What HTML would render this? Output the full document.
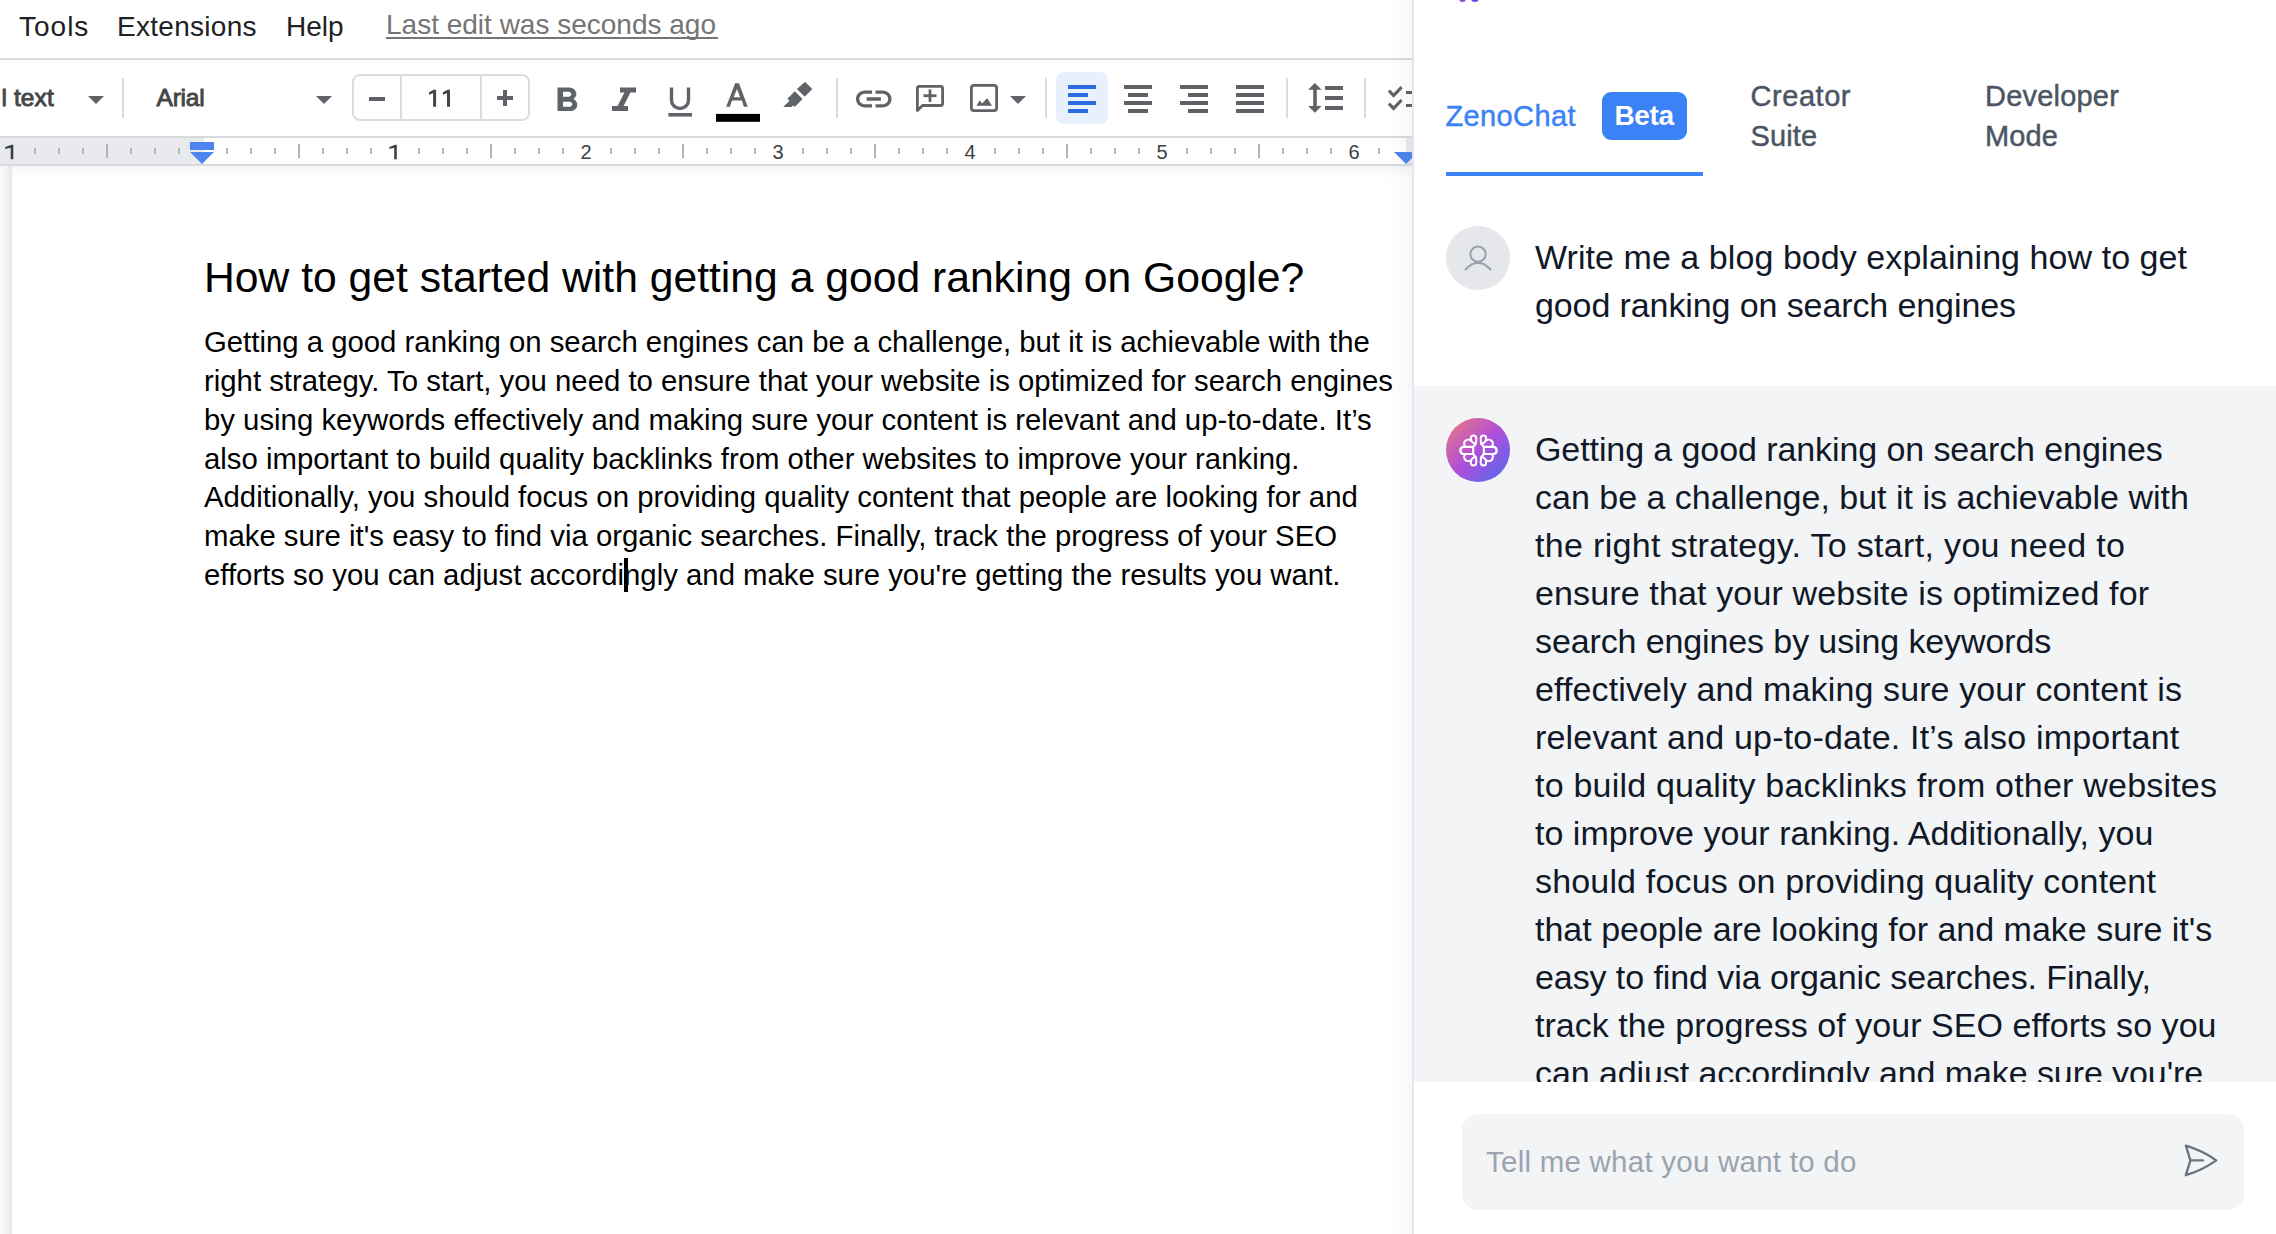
<!DOCTYPE html>
<html><head><meta charset="utf-8">
<style>
html,body{margin:0;padding:0;width:2276px;height:1234px;overflow:hidden;background:#fff;}
body{position:relative;font-family:"Liberation Sans",sans-serif;}
.t{position:absolute;white-space:nowrap;}
.r{position:absolute;}
svg.a{position:absolute;left:0;top:0;overflow:visible;}
</style></head><body>
<div class="t" style="left:19px;top:11.20px;font-size:28px;line-height:32.2px;color:#202124;font-weight:400;letter-spacing:1.000px;">Tools</div>
<div class="t" style="left:117px;top:11.20px;font-size:28px;line-height:32.2px;color:#202124;font-weight:400;letter-spacing:0.280px;">Extensions</div>
<div class="t" style="left:286px;top:11.20px;font-size:28px;line-height:32.2px;color:#202124;font-weight:400;">Help</div>
<div class="t" style="left:386px;top:9.20px;font-size:28px;line-height:32.2px;color:#757575;font-weight:400;">Last edit was seconds ago</div>
<div class="r" style="left:386px;top:37px;width:332.00px;height:2.00px;background:#757575;"></div>
<div class="r" style="left:0px;top:58px;width:1412.00px;height:2.00px;background:#dadce0;"></div>
<div class="t" style="left:1.5px;top:83.93px;font-size:24.5px;line-height:28.17px;color:#444746;font-weight:400;letter-spacing:0.100px;-webkit-text-stroke:0.9px #444746;">l text</div>
<div class="r" style="left:122px;top:78px;width:2.00px;height:40.00px;background:#dadce0;"></div>
<div class="t" style="left:156.5px;top:83.93px;font-size:24.5px;line-height:28.17px;color:#444746;font-weight:400;letter-spacing:-0.200px;-webkit-text-stroke:0.9px #444746;">Arial</div>
<div class="r" style="left:352px;top:74px;width:174px;height:43px;border:2px solid #dadce0;border-radius:8px;"></div>
<div class="r" style="left:400px;top:74px;width:2.00px;height:47.00px;background:#dadce0;"></div>
<div class="r" style="left:480px;top:74px;width:2.00px;height:47.00px;background:#dadce0;"></div>
<div class="r" style="left:369px;top:96.5px;width:16.00px;height:4.00px;background:#5f6368;"></div>
<div class="r" style="left:497px;top:96px;width:16.00px;height:4.00px;background:#5f6368;"></div>
<div class="r" style="left:503px;top:90px;width:4.00px;height:16.00px;background:#5f6368;"></div>
<div class="r" style="left:836px;top:78px;width:2.00px;height:40.00px;background:#dadce0;"></div>
<div class="r" style="left:1045px;top:78px;width:2.00px;height:40.00px;background:#dadce0;"></div>
<div class="r" style="left:1056px;top:72px;width:52.00px;height:52.00px;background:#e8f0fe;border-radius:8px;"></div>
<div class="r" style="left:1068px;top:85px;width:28.00px;height:4.00px;background:#2c6bdf;"></div>
<div class="r" style="left:1068px;top:93px;width:20.00px;height:4.00px;background:#2c6bdf;"></div>
<div class="r" style="left:1068px;top:101px;width:28.00px;height:4.00px;background:#2c6bdf;"></div>
<div class="r" style="left:1068px;top:109px;width:20.00px;height:4.00px;background:#2c6bdf;"></div>
<div class="r" style="left:1124px;top:85px;width:28.00px;height:4.00px;background:#5f6368;"></div>
<div class="r" style="left:1128px;top:93px;width:20.00px;height:4.00px;background:#5f6368;"></div>
<div class="r" style="left:1124px;top:101px;width:28.00px;height:4.00px;background:#5f6368;"></div>
<div class="r" style="left:1128px;top:109px;width:20.00px;height:4.00px;background:#5f6368;"></div>
<div class="r" style="left:1180px;top:85px;width:28.00px;height:4.00px;background:#5f6368;"></div>
<div class="r" style="left:1188px;top:93px;width:20.00px;height:4.00px;background:#5f6368;"></div>
<div class="r" style="left:1180px;top:101px;width:28.00px;height:4.00px;background:#5f6368;"></div>
<div class="r" style="left:1188px;top:109px;width:20.00px;height:4.00px;background:#5f6368;"></div>
<div class="r" style="left:1236px;top:85px;width:28.00px;height:4.00px;background:#5f6368;"></div>
<div class="r" style="left:1236px;top:93px;width:28.00px;height:4.00px;background:#5f6368;"></div>
<div class="r" style="left:1236px;top:101px;width:28.00px;height:4.00px;background:#5f6368;"></div>
<div class="r" style="left:1236px;top:109px;width:28.00px;height:4.00px;background:#5f6368;"></div>
<div class="r" style="left:1286px;top:78px;width:2.00px;height:40.00px;background:#dadce0;"></div>
<div class="r" style="left:1325px;top:86.1px;width:18.00px;height:3.70px;background:#5f6368;"></div>
<div class="r" style="left:1325px;top:96.1px;width:18.00px;height:3.70px;background:#5f6368;"></div>
<div class="r" style="left:1325px;top:106.2px;width:18.00px;height:3.70px;background:#5f6368;"></div>
<div class="r" style="left:1364.2px;top:78px;width:1.80px;height:40.00px;background:#dadce0;"></div>
<div class="r" style="left:1406px;top:91.1px;width:6.00px;height:3.00px;background:#5f6368;"></div>
<div class="r" style="left:1406px;top:104px;width:6.00px;height:3.00px;background:#5f6368;"></div>
<div class="r" style="left:0px;top:136px;width:1412.00px;height:2.00px;background:#d8dadd;"></div>
<div class="r" style="left:0px;top:138px;width:204.00px;height:26.00px;background:#e8eaed;"></div>
<div class="r" style="left:1406px;top:138px;width:6.00px;height:26.00px;background:#e8eaed;"></div>
<div class="r" style="left:0px;top:164px;width:1412.00px;height:2.00px;background:#d8dadd;"></div>
<div class="r" style="left:34px;top:148px;width:2.00px;height:6.00px;background:#b2b6bb;"></div>
<div class="r" style="left:58px;top:148px;width:2.00px;height:6.00px;background:#b2b6bb;"></div>
<div class="r" style="left:82px;top:148px;width:2.00px;height:6.00px;background:#b2b6bb;"></div>
<div class="r" style="left:106px;top:144px;width:2.00px;height:14.00px;background:#b2b6bb;"></div>
<div class="r" style="left:130px;top:148px;width:2.00px;height:6.00px;background:#b2b6bb;"></div>
<div class="r" style="left:154px;top:148px;width:2.00px;height:6.00px;background:#b2b6bb;"></div>
<div class="r" style="left:178px;top:148px;width:2.00px;height:6.00px;background:#b2b6bb;"></div>
<div class="r" style="left:226px;top:148px;width:2.00px;height:6.00px;background:#b2b6bb;"></div>
<div class="r" style="left:250px;top:148px;width:2.00px;height:6.00px;background:#b2b6bb;"></div>
<div class="r" style="left:274px;top:148px;width:2.00px;height:6.00px;background:#b2b6bb;"></div>
<div class="r" style="left:298px;top:144px;width:2.00px;height:14.00px;background:#b2b6bb;"></div>
<div class="r" style="left:322px;top:148px;width:2.00px;height:6.00px;background:#b2b6bb;"></div>
<div class="r" style="left:346px;top:148px;width:2.00px;height:6.00px;background:#b2b6bb;"></div>
<div class="r" style="left:370px;top:148px;width:2.00px;height:6.00px;background:#b2b6bb;"></div>
<div class="r" style="left:418px;top:148px;width:2.00px;height:6.00px;background:#b2b6bb;"></div>
<div class="r" style="left:442px;top:148px;width:2.00px;height:6.00px;background:#b2b6bb;"></div>
<div class="r" style="left:466px;top:148px;width:2.00px;height:6.00px;background:#b2b6bb;"></div>
<div class="r" style="left:490px;top:144px;width:2.00px;height:14.00px;background:#b2b6bb;"></div>
<div class="r" style="left:514px;top:148px;width:2.00px;height:6.00px;background:#b2b6bb;"></div>
<div class="r" style="left:538px;top:148px;width:2.00px;height:6.00px;background:#b2b6bb;"></div>
<div class="r" style="left:562px;top:148px;width:2.00px;height:6.00px;background:#b2b6bb;"></div>
<div class="r" style="left:610px;top:148px;width:2.00px;height:6.00px;background:#b2b6bb;"></div>
<div class="r" style="left:634px;top:148px;width:2.00px;height:6.00px;background:#b2b6bb;"></div>
<div class="r" style="left:658px;top:148px;width:2.00px;height:6.00px;background:#b2b6bb;"></div>
<div class="r" style="left:682px;top:144px;width:2.00px;height:14.00px;background:#b2b6bb;"></div>
<div class="r" style="left:706px;top:148px;width:2.00px;height:6.00px;background:#b2b6bb;"></div>
<div class="r" style="left:730px;top:148px;width:2.00px;height:6.00px;background:#b2b6bb;"></div>
<div class="r" style="left:754px;top:148px;width:2.00px;height:6.00px;background:#b2b6bb;"></div>
<div class="r" style="left:802px;top:148px;width:2.00px;height:6.00px;background:#b2b6bb;"></div>
<div class="r" style="left:826px;top:148px;width:2.00px;height:6.00px;background:#b2b6bb;"></div>
<div class="r" style="left:850px;top:148px;width:2.00px;height:6.00px;background:#b2b6bb;"></div>
<div class="r" style="left:874px;top:144px;width:2.00px;height:14.00px;background:#b2b6bb;"></div>
<div class="r" style="left:898px;top:148px;width:2.00px;height:6.00px;background:#b2b6bb;"></div>
<div class="r" style="left:922px;top:148px;width:2.00px;height:6.00px;background:#b2b6bb;"></div>
<div class="r" style="left:946px;top:148px;width:2.00px;height:6.00px;background:#b2b6bb;"></div>
<div class="r" style="left:994px;top:148px;width:2.00px;height:6.00px;background:#b2b6bb;"></div>
<div class="r" style="left:1018px;top:148px;width:2.00px;height:6.00px;background:#b2b6bb;"></div>
<div class="r" style="left:1042px;top:148px;width:2.00px;height:6.00px;background:#b2b6bb;"></div>
<div class="r" style="left:1066px;top:144px;width:2.00px;height:14.00px;background:#b2b6bb;"></div>
<div class="r" style="left:1090px;top:148px;width:2.00px;height:6.00px;background:#b2b6bb;"></div>
<div class="r" style="left:1114px;top:148px;width:2.00px;height:6.00px;background:#b2b6bb;"></div>
<div class="r" style="left:1138px;top:148px;width:2.00px;height:6.00px;background:#b2b6bb;"></div>
<div class="r" style="left:1186px;top:148px;width:2.00px;height:6.00px;background:#b2b6bb;"></div>
<div class="r" style="left:1210px;top:148px;width:2.00px;height:6.00px;background:#b2b6bb;"></div>
<div class="r" style="left:1234px;top:148px;width:2.00px;height:6.00px;background:#b2b6bb;"></div>
<div class="r" style="left:1258px;top:144px;width:2.00px;height:14.00px;background:#b2b6bb;"></div>
<div class="r" style="left:1282px;top:148px;width:2.00px;height:6.00px;background:#b2b6bb;"></div>
<div class="r" style="left:1306px;top:148px;width:2.00px;height:6.00px;background:#b2b6bb;"></div>
<div class="r" style="left:1330px;top:148px;width:2.00px;height:6.00px;background:#b2b6bb;"></div>
<div class="r" style="left:1378px;top:148px;width:2.00px;height:6.00px;background:#b2b6bb;"></div>
<div class="t" style="left:571px;top:139px;width:30px;text-align:center;font-size:20px;line-height:26px;color:#3c4043;">2</div>
<div class="t" style="left:763px;top:139px;width:30px;text-align:center;font-size:20px;line-height:26px;color:#3c4043;">3</div>
<div class="t" style="left:955px;top:139px;width:30px;text-align:center;font-size:20px;line-height:26px;color:#3c4043;">4</div>
<div class="t" style="left:1147px;top:139px;width:30px;text-align:center;font-size:20px;line-height:26px;color:#3c4043;">5</div>
<div class="t" style="left:1339px;top:139px;width:30px;text-align:center;font-size:20px;line-height:26px;color:#3c4043;">6</div>
<div class="r" style="left:190px;top:142px;width:24.00px;height:8.00px;background:#4e85ec;"></div>
<div class="r" style="left:0px;top:166px;width:12.00px;height:1068.00px;background:linear-gradient(to right,#f8f9fa 0,#f1f3f4 6px,#e3e5e8 12px);"></div>
<div class="r" style="left:12px;top:166px;width:1400.00px;height:12.00px;background:linear-gradient(to bottom,#f6f6f6,#ffffff);"></div>
<div class="t" style="left:204px;top:253.28px;font-size:42.67px;line-height:49.07px;color:#000;font-weight:400;">How to get started with getting a good ranking on Google?</div>
<div class="t" style="left:204px;top:325.07px;font-size:29.33px;line-height:33.73px;color:#000;font-weight:400;">Getting a good ranking on search engines can be a challenge, but it is achievable with the</div>
<div class="t" style="left:204px;top:363.92px;font-size:29.33px;line-height:33.73px;color:#000;font-weight:400;">right strategy. To start, you need to ensure that your website is optimized for search engines</div>
<div class="t" style="left:204px;top:402.77px;font-size:29.33px;line-height:33.73px;color:#000;font-weight:400;">by using keywords effectively and making sure your content is relevant and up-to-date. It’s</div>
<div class="t" style="left:204px;top:441.62px;font-size:29.33px;line-height:33.73px;color:#000;font-weight:400;">also important to build quality backlinks from other websites to improve your ranking.</div>
<div class="t" style="left:204px;top:480.47px;font-size:29.33px;line-height:33.73px;color:#000;font-weight:400;">Additionally, you should focus on providing quality content that people are looking for and</div>
<div class="t" style="left:204px;top:519.32px;font-size:29.33px;line-height:33.73px;color:#000;font-weight:400;">make sure it's easy to find via organic searches. Finally, track the progress of your SEO</div>
<div class="t" style="left:204px;top:558.17px;font-size:29.33px;line-height:33.73px;color:#000;font-weight:400;">efforts so you can adjust accordingly and make sure you're getting the results you want.</div>
<div class="r" style="left:624px;top:558px;width:4.00px;height:34.00px;background:#000;"></div>
<svg class="a" width="1" height="1"><polygon points="88,96 104,96 96.0,104" fill="#5f6368"/><polygon points="316,96 332,96 324.0,104" fill="#5f6368"/><polygon fill="#444746" points="436.1,89.8 436.1,106.8 433.1,106.8 433.1,93.2 429,94.8 429,92.3 433.6,89.8"/><polygon fill="#444746" points="450.0,89.8 450.0,106.8 447.0,106.8 447.0,93.2 442.9,94.8 442.9,92.3 447.5,89.8"/><g transform="translate(544.6,80.8) scale(1.842,1.679)"><path fill="#5f6368" d="M15.6 10.79c.97-.67 1.65-1.77 1.65-2.79 0-2.26-1.75-4-4-4H7v14h7.04c2.09 0 3.71-1.7 3.71-3.79 0-1.52-.86-2.82-2.15-3.42zM10 6.5h3c.83 0 1.5.67 1.5 1.5s-.67 1.5-1.5 1.5h-3v-3zm3.5 9H10v-3h3.5c.83 0 1.5.67 1.5 1.5s-.67 1.5-1.5 1.5z"/></g><g transform="translate(600,80.8) scale(2,1.679)"><path fill="#5f6368" d="M10 4v3h2.21l-3.42 8H6v3h8v-3h-2.21l3.42-8H18V4z"/></g><path d="M671.5,87.5 V100 a8.5,8.5 0 0 0 17,0 V87.5" fill="none" stroke="#5f6368" stroke-width="3.4"/><rect x="668.4" y="113" width="23.6" height="3.6" fill="#5f6368"/><path fill="#5f6368" fill-rule="evenodd" d="M735.1,83.2 H739 L747.7,106.7 H743.8 L741.9,100.6 H732 L729.8,106.7 H726.2 Z M733.7,97.2 H740.2 L736.9,89 Z"/><rect x="716" y="113.9" width="44" height="7.9" fill="#000"/><polygon fill="#5f6368" points="794.8,91.2 802.6,98.9 794.6,106.9 793.1,105.2 791.7,106.9 783.2,106.9 789.5,100.8 787.3,98.7"/><polygon fill="#5f6368" stroke="#5f6368" stroke-width="1.2" stroke-linejoin="round" points="805,82.6 811.4,89 804.7,95.9 797.8,89"/><g transform="translate(852.4,78.6) scale(1.78,1.7)"><path fill="#5f6368" d="M3.9 12c0-1.71 1.39-3.1 3.1-3.1h4V7H7c-2.76 0-5 2.24-5 5s2.24 5 5 5h4v-1.9H7c-1.71 0-3.1-1.39-3.1-3.1zM8 13h8v-2H8v2zm9-6h-4v1.9h4c1.71 0 3.1 1.39 3.1 3.1s-1.39 3.1-3.1 3.1h-4V17h4c2.76 0 5-2.24 5-5s-2.24-5-5-5z"/></g><path fill="none" stroke="#5f6368" stroke-width="2.8" stroke-linejoin="round" d="M917.4,107 V88.4 a2,2 0 0 1 2,-2 H940.6 a2,2 0 0 1 2,2 V103.5 a2,2 0 0 1 -2,2 H922.5 L917.4,110.6 Z"/><rect x="923.5" y="94.3" width="13" height="2.8" fill="#5f6368"/><rect x="928.6" y="89.4" width="2.8" height="12.6" fill="#5f6368"/><rect x="971.4" y="85.4" width="25.2" height="25.2" rx="2.5" fill="none" stroke="#5f6368" stroke-width="2.8"/><polygon fill="#5f6368" points="976.5,105.7 979.7,100.3 982,103.5 987.2,98.2 992,105.7"/><polygon points="1010,96 1026,96 1018.0,104" fill="#5f6368"/><polygon fill="#5f6368" points="1314.9,83.1 1321.7,89.8 1316.8,89.8 1316.8,106.1 1321.7,106.1 1314.9,112.8 1308.1,106.1 1313.2,106.1 1313.2,89.8 1308.1,89.8"/><polyline fill="none" stroke="#5f6368" stroke-width="3.1" points="1388.9,90.7 1393.6,95.5 1401.6,87.1"/><polyline fill="none" stroke="#5f6368" stroke-width="3.1" points="1388.9,103.6 1393.6,108.4 1401.6,100"/><polygon fill="#3c4043" points="13.3,144.8 13.3,159.20000000000002 10.700000000000001,159.20000000000002 10.700000000000001,147.68 5.2,149.12 5.2,146.96 11.74,144.8"/><polygon fill="#3c4043" points="396.79999999999995,144.8 396.79999999999995,159.20000000000002 394.19999999999993,159.20000000000002 394.19999999999993,147.68 389.4,149.12 389.4,146.96 395.23999999999995,144.8"/><polygon fill="#4e85ec" points="190,152 214,152 202,164"/><polygon fill="#4e85ec" points="1394,152 1418,152 1406,164"/></svg>
<div class="r" style="left:1385px;top:0px;width:27.00px;height:1234.00px;background:linear-gradient(to right,rgba(0,0,0,0),rgba(0,0,0,0.03));"></div>
<div class="r" style="left:1412px;top:0px;width:2.00px;height:1234.00px;background:#e4e6f4;"></div>
<div class="r" style="left:1414px;top:0px;width:862.00px;height:1234.00px;background:#ffffff;"></div>
<div class="r" style="left:1458.5px;top:-5px;width:7.10px;height:7.00px;background:#8a46df;border-radius:50%;"></div>
<div class="r" style="left:1471.2px;top:-5px;width:7.60px;height:7.00px;background:#5552e3;border-radius:50%;"></div>
<div class="t" style="left:1445.5px;top:100.28px;font-size:29px;line-height:33.35px;color:#3b82f6;font-weight:400;letter-spacing:0.378px;-webkit-text-stroke:0.45px #3b82f6;">ZenoChat</div>
<div class="r" style="left:1602px;top:92px;width:85.00px;height:48.00px;background:#3b82f6;border-radius:9px;"></div>
<div class="t" style="left:1614.5px;top:100.20px;font-size:28px;line-height:32.2px;color:#fff;font-weight:700;letter-spacing:-0.400px;">Beta</div>
<div class="r" style="left:1446px;top:172px;width:257.00px;height:4.00px;background:#3b82f6;"></div>
<div class="t" style="left:1750.5px;top:79.78px;font-size:29px;line-height:33.35px;color:#4b5563;font-weight:400;letter-spacing:0.550px;-webkit-text-stroke:0.45px #4b5563;">Creator</div>
<div class="t" style="left:1750.5px;top:119.78px;font-size:29px;line-height:33.35px;color:#4b5563;font-weight:400;letter-spacing:0.125px;-webkit-text-stroke:0.45px #4b5563;">Suite</div>
<div class="t" style="left:1985px;top:79.78px;font-size:29px;line-height:33.35px;color:#4b5563;font-weight:400;letter-spacing:0.202px;-webkit-text-stroke:0.45px #4b5563;">Developer</div>
<div class="t" style="left:1985px;top:119.78px;font-size:29px;line-height:33.35px;color:#4b5563;font-weight:400;letter-spacing:0.119px;-webkit-text-stroke:0.45px #4b5563;">Mode</div>
<div class="r" style="left:1446px;top:226px;width:64.00px;height:64.00px;background:#e5e7eb;border-radius:50%;"></div>
<div class="t" style="left:1535px;top:237.67px;font-size:34px;line-height:39.1px;color:#111827;font-weight:400;letter-spacing:0.060px;">Write me a blog body explaining how to get</div>
<div class="t" style="left:1535px;top:285.67px;font-size:34px;line-height:39.1px;color:#111827;font-weight:400;letter-spacing:-0.100px;">good ranking on search engines</div>
<div class="r" style="left:1414px;top:386px;width:862px;height:696px;background:#f3f4f6;overflow:hidden;">
<div class="t" style="left:121px;top:43.67px;font-size:34px;line-height:39.1px;color:#111827;font-weight:400;letter-spacing:-0.090px;">Getting a good ranking on search engines</div>
<div class="t" style="left:121px;top:91.67px;font-size:34px;line-height:39.1px;color:#111827;font-weight:400;letter-spacing:-0.002px;">can be a challenge, but it is achievable with</div>
<div class="t" style="left:121px;top:139.67px;font-size:34px;line-height:39.1px;color:#111827;font-weight:400;letter-spacing:0.323px;">the right strategy. To start, you need to</div>
<div class="t" style="left:121px;top:187.67px;font-size:34px;line-height:39.1px;color:#111827;font-weight:400;letter-spacing:0.137px;">ensure that your website is optimized for</div>
<div class="t" style="left:121px;top:235.67px;font-size:34px;line-height:39.1px;color:#111827;font-weight:400;letter-spacing:-0.114px;">search engines by using keywords</div>
<div class="t" style="left:121px;top:283.67px;font-size:34px;line-height:39.1px;color:#111827;font-weight:400;letter-spacing:0.121px;">effectively and making sure your content is</div>
<div class="t" style="left:121px;top:331.67px;font-size:34px;line-height:39.1px;color:#111827;font-weight:400;letter-spacing:0.184px;">relevant and up-to-date. It’s also important</div>
<div class="t" style="left:121px;top:379.67px;font-size:34px;line-height:39.1px;color:#111827;font-weight:400;letter-spacing:0.205px;">to build quality backlinks from other websites</div>
<div class="t" style="left:121px;top:427.67px;font-size:34px;line-height:39.1px;color:#111827;font-weight:400;letter-spacing:0.023px;">to improve your ranking. Additionally, you</div>
<div class="t" style="left:121px;top:475.67px;font-size:34px;line-height:39.1px;color:#111827;font-weight:400;letter-spacing:0.165px;">should focus on providing quality content</div>
<div class="t" style="left:121px;top:523.67px;font-size:34px;line-height:39.1px;color:#111827;font-weight:400;letter-spacing:-0.005px;">that people are looking for and make sure it's</div>
<div class="t" style="left:121px;top:571.67px;font-size:34px;line-height:39.1px;color:#111827;font-weight:400;letter-spacing:-0.079px;">easy to find via organic searches. Finally,</div>
<div class="t" style="left:121px;top:619.67px;font-size:34px;line-height:39.1px;color:#111827;font-weight:400;letter-spacing:0.041px;">track the progress of your SEO efforts so you</div>
<div class="t" style="left:121px;top:667.67px;font-size:34px;line-height:39.1px;color:#111827;font-weight:400;letter-spacing:-0.085px;">can adjust accordingly and make sure you're</div>
</div>
<div class="r" style="left:1446px;top:418px;width:64.00px;height:64.00px;background:linear-gradient(135deg,#ee7a7a 0%,#b04fd8 50%,#4a6cf2 100%);border-radius:50%;"></div>
<div class="r" style="left:1462px;top:1114px;width:782.00px;height:96.00px;background:#f3f4f6;border-radius:16px;"></div>
<div class="t" style="left:1486px;top:1144.82px;font-size:29.5px;line-height:33.92px;color:#9ca3af;font-weight:400;letter-spacing:0.241px;-webkit-text-stroke:0px #9ca3af;">Tell me what you want to do</div>
<svg class="a" width="1" height="1"><circle cx="1478" cy="254.2" r="7.6" fill="none" stroke="#94a0ae" stroke-width="2"/><path d="M1465.5,269.5 Q1478,256 1490.5,269.5" fill="none" stroke="#94a0ae" stroke-width="2" stroke-linecap="round"/><g transform="translate(2180.4,1140.4) scale(1.667)"><path d="M6 12L3.269 3.126A59.768 59.768 0 0121.485 12 59.77 59.77 0 013.27 20.876L5.999 12zm0 0h7.5" fill="none" stroke="#6b7280" stroke-width="1.4" stroke-linecap="round" stroke-linejoin="round"/></g><defs><linearGradient id="bg" gradientUnits="userSpaceOnUse" x1="1446" y1="418" x2="1510" y2="482"><stop offset="0" stop-color="#ee7a7a"/><stop offset="0.5" stop-color="#b04fd8"/><stop offset="1" stop-color="#4a6cf2"/></linearGradient></defs><g transform="translate(1454,426)" fill="none" stroke="#fff" stroke-width="2" stroke-linejoin="round" stroke-linecap="round"><path d="M21.6,18.0 C19.4,17.3 16.8,15.2 16.8,12.3 C16.8,10.4 18.0,9.4 19.5,9.4 C21.2,9.4 22.3,10.8 22.3,12.6 C22.3,14.6 22.3,16.2 21.6,18.0 Z"/><path d="M17.0,14.6 C15.4,13.3 12.6,13.4 11.1,15.0 C9.9,16.3 10.0,18.6 10.9,20.6"/><path d="M19.2,20.8 H9.9 C7.7,20.8 6.4,22.6 6.4,24.4 C6.4,26.2 7.7,27.9 9.9,27.9 H19.2"/><path d="M19.2,20.6 V24.4 M19.2,20.8 L21.6,18.0"/><g transform="matrix(1,0,0,-1,0,48.8)"><path d="M21.6,18.0 C19.4,17.3 16.8,15.2 16.8,12.3 C16.8,10.4 18.0,9.4 19.5,9.4 C21.2,9.4 22.3,10.8 22.3,12.6 C22.3,14.6 22.3,16.2 21.6,18.0 Z"/><path d="M17.0,14.6 C15.4,13.3 12.6,13.4 11.1,15.0 C9.9,16.3 10.0,18.6 10.9,20.6"/><path d="M19.2,20.8 H9.9 C7.7,20.8 6.4,22.6 6.4,24.4 C6.4,26.2 7.7,27.9 9.9,27.9 H19.2"/><path d="M19.2,20.6 V24.4 M19.2,20.8 L21.6,18.0"/></g><g transform="matrix(-1,0,0,1,49,0)"><path d="M21.6,18.0 C19.4,17.3 16.8,15.2 16.8,12.3 C16.8,10.4 18.0,9.4 19.5,9.4 C21.2,9.4 22.3,10.8 22.3,12.6 C22.3,14.6 22.3,16.2 21.6,18.0 Z"/><path d="M17.0,14.6 C15.4,13.3 12.6,13.4 11.1,15.0 C9.9,16.3 10.0,18.6 10.9,20.6"/><path d="M19.2,20.8 H9.9 C7.7,20.8 6.4,22.6 6.4,24.4 C6.4,26.2 7.7,27.9 9.9,27.9 H19.2"/><path d="M19.2,20.6 V24.4 M19.2,20.8 L21.6,18.0"/><g transform="matrix(1,0,0,-1,0,48.8)"><path d="M21.6,18.0 C19.4,17.3 16.8,15.2 16.8,12.3 C16.8,10.4 18.0,9.4 19.5,9.4 C21.2,9.4 22.3,10.8 22.3,12.6 C22.3,14.6 22.3,16.2 21.6,18.0 Z"/><path d="M17.0,14.6 C15.4,13.3 12.6,13.4 11.1,15.0 C9.9,16.3 10.0,18.6 10.9,20.6"/><path d="M19.2,20.8 H9.9 C7.7,20.8 6.4,22.6 6.4,24.4 C6.4,26.2 7.7,27.9 9.9,27.9 H19.2"/><path d="M19.2,20.6 V24.4 M19.2,20.8 L21.6,18.0"/></g></g></g></svg>
</body></html>
